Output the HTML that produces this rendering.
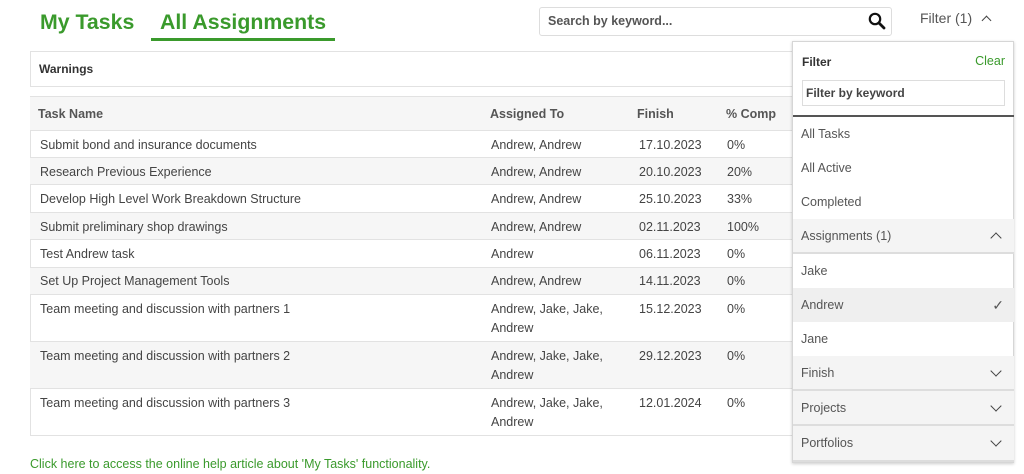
<!DOCTYPE html><html><head><style>
*{box-sizing:border-box;margin:0;padding:0}
body{width:1024px;height:474px;background:#fff;font-family:"Liberation Sans",sans-serif;color:#444;position:relative;overflow:hidden;font-size:12.5px}
.a{position:absolute}
.tab{font-size:21.3px;font-weight:bold;color:#3a9a2c;top:10px}
.row{position:absolute;left:30px;width:770px;border-bottom:1px solid #e2e2e2}
.row span{position:absolute}
.g{background:#f6f6f6}
.pi{position:absolute;left:0;width:221px;height:34px;padding:0 8px;line-height:34px;color:#555;font-size:12.5px}
.chev{position:absolute;right:14px;top:11px;width:8px;height:8px;border-right:1.8px solid #444;border-bottom:1.8px solid #444;transform:rotate(45deg)}
.up{transform:rotate(-135deg);top:15px}
</style></head><body>
<div class="a tab" style="left:40px">My Tasks</div>
<div class="a tab" style="left:160px">All Assignments</div>
<div class="a" style="left:151px;top:38px;width:184px;height:3px;background:#3a9a2c"></div>
<div class="a" style="left:539px;top:7px;width:353px;height:29px;border:1px solid #ddd;border-radius:3px;padding:6px 8px;font-weight:bold;color:#555;font-size:12.5px">Search by keyword...</div>
<svg class="a" style="left:868px;top:12px" width="18" height="18" viewBox="0 0 18 18"><circle cx="7" cy="7" r="5.2" fill="none" stroke="#111" stroke-width="2.2"/><line x1="11" y1="11" x2="16" y2="16" stroke="#111" stroke-width="2.8" stroke-linecap="round"/></svg>
<div class="a" style="left:920px;top:10px;font-size:14px;color:#555">Filter (1)</div>
<div class="a" style="left:983px;top:17px;width:7px;height:7px;border-left:1.8px solid #444;border-top:1.8px solid #444;transform:rotate(45deg)"></div>
<div class="a" style="left:30px;top:51px;width:770px;height:36px;border:1px solid #e2e2e2;padding:10px 8px;font-weight:bold;color:#333;font-size:12px">Warnings</div>
<div class="a" style="left:30px;top:96px;width:770px;height:340px;border:1px solid #e2e2e2"></div>
<div class="row g" style="top:97px;height:34px;font-weight:bold;color:#555"><span style="left:8px;top:10px">Task Name</span><span style="left:460px;top:10px">Assigned To</span><span style="left:607px;top:10px">Finish</span><span style="left:696px;top:10px">% Comp</span></div>
<div class="row" style="top:131px;height:27px"><span style="left:10px;top:7px">Submit bond and insurance documents</span><span style="left:461px;top:7px">Andrew, Andrew</span><span style="left:609px;top:7px">17.10.2023</span><span style="left:697px;top:7px">0%</span></div>
<div class="row g" style="top:158px;height:27px"><span style="left:10px;top:7px">Research Previous Experience</span><span style="left:461px;top:7px">Andrew, Andrew</span><span style="left:609px;top:7px">20.10.2023</span><span style="left:697px;top:7px">20%</span></div>
<div class="row" style="top:185px;height:28px"><span style="left:10px;top:7px">Develop High Level Work Breakdown Structure</span><span style="left:461px;top:7px">Andrew, Andrew</span><span style="left:609px;top:7px">25.10.2023</span><span style="left:697px;top:7px">33%</span></div>
<div class="row g" style="top:213px;height:27px"><span style="left:10px;top:7px">Submit preliminary shop drawings</span><span style="left:461px;top:7px">Andrew, Andrew</span><span style="left:609px;top:7px">02.11.2023</span><span style="left:697px;top:7px">100%</span></div>
<div class="row" style="top:240px;height:28px"><span style="left:10px;top:7px">Test Andrew task</span><span style="left:461px;top:7px">Andrew</span><span style="left:609px;top:7px">06.11.2023</span><span style="left:697px;top:7px">0%</span></div>
<div class="row g" style="top:268px;height:27px"><span style="left:10px;top:6px">Set Up Project Management Tools</span><span style="left:461px;top:6px">Andrew, Andrew</span><span style="left:609px;top:6px">14.11.2023</span><span style="left:697px;top:6px">0%</span></div>
<div class="row" style="top:295px;height:47px;line-height:19px"><span style="left:10px;top:5px">Team meeting and discussion with partners 1</span><span style="left:461px;top:5px">Andrew, Jake, Jake,<br>Andrew</span><span style="left:609px;top:5px">15.12.2023</span><span style="left:697px;top:5px">0%</span></div>
<div class="row g" style="top:342px;height:47px;line-height:19px"><span style="left:10px;top:5px">Team meeting and discussion with partners 2</span><span style="left:461px;top:5px">Andrew, Jake, Jake,<br>Andrew</span><span style="left:609px;top:5px">29.12.2023</span><span style="left:697px;top:5px">0%</span></div>
<div class="row" style="top:389px;height:47px;line-height:19px"><span style="left:10px;top:5px">Team meeting and discussion with partners 3</span><span style="left:461px;top:5px">Andrew, Jake, Jake,<br>Andrew</span><span style="left:609px;top:5px">12.01.2024</span><span style="left:697px;top:5px">0%</span></div>
<div class="a" style="left:30px;top:457px;color:#3a9a2c;font-size:12.5px">Click here to access the online help article about 'My Tasks' functionality.</div>
<div class="a" style="left:792px;top:41px;width:222px;height:422px;background:#fff;border:1px solid #d6d6d6;box-shadow:0 1px 3px rgba(0,0,0,.2)">
<div class="a" style="left:9px;top:13px;font-weight:bold;color:#333;font-size:12px">Filter</div>
<div class="a" style="right:8px;top:12px;color:#3a9a2c;font-size:12.5px">Clear</div>
<div class="a" style="left:9px;top:38px;width:203px;height:26px;border:1px solid #ddd;padding:5px 3px;font-weight:bold;color:#444;font-size:12px">Filter by keyword</div>
<div class="a" style="left:0;top:73px;width:221px;height:2px;background:#555"></div>
<div class="pi" style="top:75px">All Tasks</div>
<div class="pi" style="top:109px">All Active</div>
<div class="pi" style="top:143px">Completed</div>
<div class="pi" style="top:177px;background:#f4f4f4;border-bottom:2px solid #ddd;height:35px">Assignments (1)<div class="chev up"></div></div>
<div class="pi" style="top:212px">Jake</div>
<div class="pi" style="top:246px;background:#efefef">Andrew<span style="position:absolute;right:10px;font-size:14px">✓</span></div>
<div class="pi" style="top:280px">Jane</div>
<div class="pi" style="top:314px;background:#f4f4f4;border-bottom:2px solid #ddd;height:35px">Finish<div class="chev"></div></div>
<div class="pi" style="top:349px;background:#f4f4f4;border-bottom:2px solid #ddd;height:35px">Projects<div class="chev"></div></div>
<div class="pi" style="top:384px;background:#f4f4f4;border-bottom:2px solid #ddd;height:36px">Portfolios<div class="chev"></div></div>
</div>
</body></html>
